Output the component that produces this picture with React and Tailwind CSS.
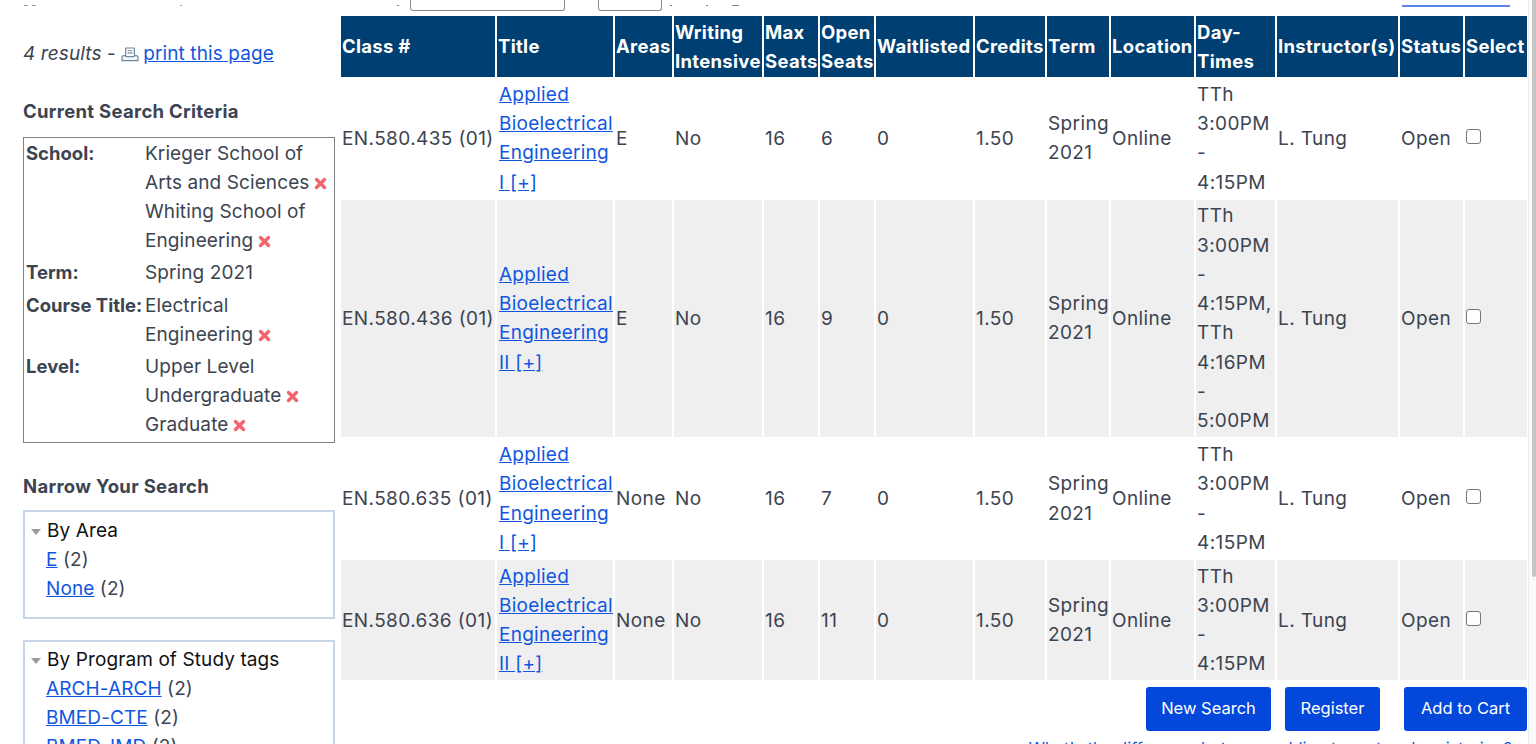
import React from 'react';

const columns = [
  { label: ['Class #'], width: 'w-[154px]' },
  { label: ['Title'], width: 'w-[116px]' },
  { label: ['Areas'], width: 'w-[57px]' },
  { label: ['Writing', 'Intensive'], width: 'w-[88px]' },
  { label: ['Max', 'Seats'], width: 'w-[54px]' },
  { label: ['Open', 'Seats'], width: 'w-[54px]' },
  { label: ['Waitlisted'], width: 'w-[97px]' },
  { label: ['Credits'], width: 'w-[70px]' },
  { label: ['Term'], width: 'w-[62px]' },
  { label: ['Location'], width: 'w-[83px]' },
  { label: ['Day-', 'Times'], width: 'w-[79px]' },
  { label: ['Instructor(s)'], width: 'w-[121px]' },
  { label: ['Status'], width: 'w-[63px]' },
  { label: ['Select'], width: 'w-[62px]' },
];

const shortTime = ['TTh', '3:00PM', '-', '4:15PM'];
const longTime = ['TTh', '3:00PM', '-', '4:15PM,', 'TTh', '4:16PM', '-', '5:00PM'];

const rows = [
  { id: 'EN.580.435 (01)', num: 'I', area: 'E', open: '6', times: shortTime },
  { id: 'EN.580.436 (01)', num: 'II', area: 'E', open: '9', times: longTime },
  { id: 'EN.580.635 (01)', num: 'I', area: 'None', open: '7', times: shortTime },
  { id: 'EN.580.636 (01)', num: 'II', area: 'None', open: '11', times: shortTime },
];

const Lines = ({ items }) => items.map((line, i) => <div key={i}>{line}</div>);

const RemoveIcon = () => (
  <svg width="13" height="13" viewBox="0 0 13 13" className="inline-block ml-[5px] align-[-1px]">
    <path d="M2.5 2.5 L10.5 10.5 M10.5 2.5 L2.5 10.5" stroke="#f4646e" strokeWidth="3.4" strokeLinecap="round" />
  </svg>
);

const PrintIcon = () => (
  <svg width="18" height="15" viewBox="0 0 18 15" className="inline-block mr-[4px] align-[-2px]" fill="none" stroke="#7089a3" strokeWidth="1.2">
    <path d="M1 13.6 V10.5 C1 9.4 1.8 8.6 3 8.6 H15 C16.2 8.6 17 9.4 17 10.5 V13.6 Z" fill="#f4f7fa" />
    <rect x="4.6" y="1" width="8.8" height="8.6" rx="0.8" fill="#ffffff" />
    <path d="M6.5 3.6 H11.5 M6.5 6 H11.5" stroke="#8fa4b9" strokeWidth="1.3" />
  </svg>
);

const FacetTriangle = () => (
  <span className="w-0 h-0 border-x-[5px] border-x-transparent border-t-[6px] border-t-[#9a9a9a] mr-[6px] mt-[3px]" />
);

const Facet = ({ title, items, className }) => (
  <div className={`border-2 border-[#c6d6e6] pl-[6px] ${className}`}>
    <div className="flex items-center text-[#111] h-[29px]">
      <FacetTriangle />
      {title}
    </div>
    {items.map(([name, count]) => (
      <div key={name} className="pl-[15px] h-[29px]">
        <a href="#" className="text-[#1156e0] underline">{name}</a> ({count})
      </div>
    ))}
  </div>
);

const CriteriaRow = ({ label, children, className = '' }) => (
  <div className={`flex ${className}`}>
    <div className="w-[119px] shrink-0 font-bold text-[18.5px] tracking-normal whitespace-nowrap">{label}</div>
    <div className="whitespace-nowrap">{children}</div>
  </div>
);

const Sidebar = () => (
  <div className="w-[312px] ml-[23px] shrink-0 pt-[24px] tracking-[0.1px]">
    <div className="whitespace-nowrap">
      <em>4 results</em> - <PrintIcon />
      <a href="#" className="text-[#1156e0] underline">print this page</a>
    </div>
    <h3 className="font-bold mt-[29px] text-[18.5px] tracking-[0.3px]">Current Search Criteria</h3>
    <div className="border border-[#808080] mt-[11px] h-[306px] pl-[2px] pt-[1px]">
      <CriteriaRow label="School:">
        <div>Krieger School of</div>
        <div>Arts and Sciences<RemoveIcon /></div>
        <div>Whiting School of</div>
        <div>Engineering<RemoveIcon /></div>
      </CriteriaRow>
      <CriteriaRow label="Term:" className="mt-[3px]">Spring 2021</CriteriaRow>
      <CriteriaRow label="Course Title:" className="mt-[4px]">
        <div>Electrical</div>
        <div>Engineering<RemoveIcon /></div>
      </CriteriaRow>
      <CriteriaRow label="Level:" className="mt-[3px]">
        <div>Upper Level</div>
        <div>Undergraduate<RemoveIcon /></div>
        <div>Graduate<RemoveIcon /></div>
      </CriteriaRow>
    </div>
    <h3 className="font-bold mt-[29px] text-[18.5px] tracking-[0.3px]">Narrow Your Search</h3>
    <Facet title="By Area" items={[['E', 2], ['None', 2]]} className="mt-[9px] h-[109px] pt-[4px]" />
    <Facet
      title="By Program of Study tags"
      items={[['ARCH-ARCH', 2], ['BMED-CTE', 2], ['BMED-IMD', 2]]}
      className="mt-[21px] pt-[3px]"
    />
  </div>
);

const ResultsTable = () => (
  <table className="table-fixed border-separate border-spacing-x-[2px] border-spacing-y-[1px] w-[1190px]">
    <colgroup>
      {columns.map((c, i) => <col key={i} className={c.width} />)}
    </colgroup>
    <thead>
      <tr>
        {columns.map((c, i) => (
          <th key={i} className="bg-[#003f72] text-white text-left font-bold px-[1px] py-[1.5px] whitespace-nowrap text-[18.5px] tracking-[0.3px]">
            <Lines items={c.label} />
          </th>
        ))}
      </tr>
    </thead>
    <tbody>
      {rows.map((r, i) => {
        const cell = `px-[1px] py-[1.7px] leading-[29.3px] whitespace-nowrap ${i % 2 ? 'bg-[#efefef]' : 'bg-white'}`;
        return (
          <tr key={r.id}>
            <td className={cell}>{r.id}</td>
            <td className={cell}>
              <a href="#" className="block ml-[1px] text-[#1156e0] underline tracking-[0.25px]">
                <Lines items={['Applied', 'Bioelectrical', 'Engineering', `${r.num} [+]`]} />
              </a>
            </td>
            <td className={cell}>{r.area}</td>
            <td className={cell}>No</td>
            <td className={cell}>16</td>
            <td className={cell}>{r.open}</td>
            <td className={cell}>0</td>
            <td className={cell}>1.50</td>
            <td className={cell}><Lines items={['Spring', '2021']} /></td>
            <td className={cell}>Online</td>
            <td className={cell}><Lines items={r.times} /></td>
            <td className={cell}>L. Tung</td>
            <td className={cell}>Open</td>
            <td className={cell}>
              <input type="checkbox" className="appearance-none block w-[15px] h-[15px] mb-[4px] bg-white border border-[#767676] rounded-[3px]" />
            </td>
          </tr>
        );
      })}
    </tbody>
  </table>
);

const ActionButton = ({ children, className }) => (
  <button className={`h-[44px] bg-[#0348db] text-white text-[16.5px] tracking-normal rounded-[3px] ${className}`}>{children}</button>
);

// bits of the line above the results, cut off by the top of the window
const TopStrip = () => (
  <div className="flex h-[15px] items-start">
    <div className="ml-[24px] mt-[5px] w-[4px] h-[1px] bg-[#9aa0a8]" />
    <div className="ml-[4px] mt-[5px] w-[4px] h-[1px] bg-[#9aa0a8]" />
    <div className="ml-[144px] mt-[5px] w-[2px] h-[1px] bg-[#9aa0a8]" />
    <div className="ml-[215px] mt-[5px] w-[2px] h-[1px] bg-[#7d838c]" />
    <div className="ml-[11px] w-[155px] h-[11px] border-x border-b border-[#8a8a8a] rounded-b-[3px]" />
    <div className="ml-[33px] w-[64px] h-[11px] border-x border-b border-[#8a8a8a] rounded-b-[3px]" />
    <div className="ml-[8px] mt-[5px] w-[2px] h-[1px] bg-[#7d838c]" />
    <div className="ml-[34px] mt-[5px] w-[2px] h-[1px] bg-[#7d838c]" />
    <div className="ml-[24px] mt-[5px] w-[7px] h-[1px] bg-[#7d838c]" />
    <div className="ml-[663px] w-[108px] h-[7px] border-b-2 border-[#5b86ea]" />
  </div>
);

export default function App() {
  return (
    <div className="relative h-[744px] w-[1536px] overflow-hidden bg-white text-[#3c4451] text-[19px] tracking-[0.4px] leading-[29px] font-['Inter',sans-serif]">
      <TopStrip />
      <div className="flex">
        <Sidebar />
        <div className="ml-[4px] w-[1190px] shrink-0">
          <ResultsTable />
          <div className="flex justify-end pr-[2px] mt-[5.5px]">
            <ActionButton className="w-[125px]">New Search</ActionButton>
            <ActionButton className="w-[95px] ml-[14px]">Register</ActionButton>
            <ActionButton className="w-[123px] ml-[24px]">Add to Cart</ActionButton>
          </div>
          <div className="text-right pr-[17px] mt-[3px] text-[#1156e0] text-[16.5px] tracking-normal whitespace-nowrap">
            What's the difference between adding to cart and registering?
          </div>
        </div>
      </div>
      <div className="absolute top-0 right-0 w-[8px] h-full bg-[#fafafa] border-l border-[#ececec]">
        <div className="ml-[3px] w-[4px] h-[577px] bg-[#c4c4c4] rounded-b-[2px]" />
      </div>
    </div>
  );
}
